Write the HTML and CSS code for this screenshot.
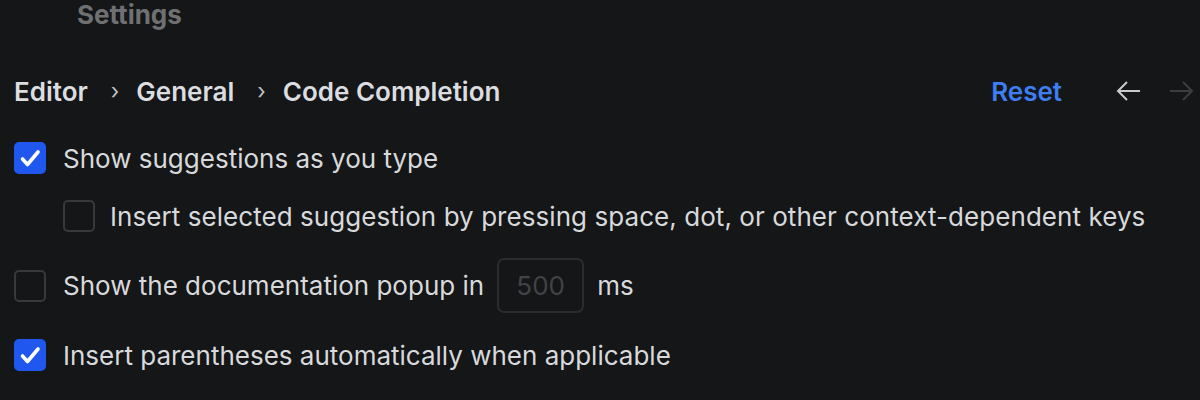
FILE: index.html
```html
<!DOCTYPE html>
<html lang="en">
<head>
    <meta charset="UTF-8">
    <title>Settings - Code Completion</title>
    <link rel="stylesheet" href="styles.css">
</head>
<body>
    <div class="title">Settings</div>

    <div class="topbar">
        <div class="crumbs">
            <span>Editor</span>
            <span class="sep">›</span>
            <span>General</span>
            <span class="sep">›</span>
            <span>Code Completion</span>
        </div>
        <div class="actions">
            <a class="reset" href="#">Reset</a>
            <span class="nav">
                <svg width="26" height="24" viewBox="0 0 26 24"><path d="M24 12H2M11 3L2 12L11 21" fill="none" stroke="currentColor" stroke-width="2"/></svg>
            </span>
            <span class="nav off">
                <svg width="26" height="24" viewBox="0 0 26 24"><path d="M2 12H24M15 3L24 12L15 21" fill="none" stroke="currentColor" stroke-width="2"/></svg>
            </span>
        </div>
    </div>

    <div class="options">
        <label class="row">
            <span class="box on">
                <svg width="32" height="32" viewBox="0 0 32 32"><path d="M8.5 17L13.5 22.5L24 10" fill="none" stroke="#fff" stroke-width="3.6" stroke-linecap="round" stroke-linejoin="round"/></svg>
            </span>
            Show suggestions as you type
        </label>
        <label class="row sub">
            <span class="box"></span>
            Insert selected suggestion by pressing space, dot, or other context-dependent keys
        </label>
        <label class="row">
            <span class="box"></span>
            Show the documentation popup in
            <input class="num" type="text" placeholder="500">
            ms
        </label>
        <label class="row">
            <span class="box on">
                <svg width="32" height="32" viewBox="0 0 32 32"><path d="M8.5 17L13.5 22.5L24 10" fill="none" stroke="#fff" stroke-width="3.6" stroke-linecap="round" stroke-linejoin="round"/></svg>
            </span>
            Insert parentheses automatically when applicable
        </label>
    </div>
</body>
</html>
```

FILE: styles.css
```css
body {
    margin: 0;
    padding: 0 6px 0 14px;
    background: #141617;
    color: #d8d9dc;
    font-family: 'Inter', 'Noto Sans', sans-serif;
    font-size: 26px;
    height: 400px;
    overflow: hidden;
}
.title {
    margin-left: 63px;
    font-size: 26px;
    font-weight: 700;
    color: #6f7072;
    line-height: 30px;
}
.topbar {
    display: flex;
    justify-content: space-between;
    align-items: center;
    margin-top: 46px;
    height: 30px;
}
.crumbs {
    display: flex;
    align-items: center;
    font-weight: 600;
    color: #dcdde0;
}
.crumbs .sep {
    font-weight: 400;
    color: #bfc0c3;
    margin: 0 17px 0 23px;
    font-size: 22px;
}
.actions {
    display: flex;
    align-items: center;
}
.reset {
    color: #3f7ef2;
    font-weight: 600;
    text-decoration: none;
    margin-right: 54px;
}
.nav {
    display: flex;
    color: #c9cacd;
}
.nav.off {
    color: #3b3d40;
    margin-left: 26px;
}
.options {
    display: flex;
    flex-direction: column;
    gap: 26px;
    margin-top: 36px;
}
.row {
    display: flex;
    align-items: center;
    gap: 17px;
}
.row.sub {
    margin-left: 49px;
    gap: 15px;
    letter-spacing: 0.06px;
}
.box {
    width: 32px;
    height: 32px;
    box-sizing: border-box;
    border: 2px solid #38393c;
    border-radius: 5px;
    flex-shrink: 0;
    display: flex;
}
.box.on {
    background: #2057ee;
    border: none;
}
.num {
    width: 87px;
    height: 55px;
    box-sizing: border-box;
    margin: 0 -4px 0 -4px;
    background: transparent;
    border: 2px solid #2a2c2f;
    border-radius: 7px;
    font-family: 'Inter', 'Noto Sans', sans-serif;
    font-size: 26px;
    text-align: center;
    color: #d8d9dc;
}
.num::placeholder {
    color: #414346;
}
```
